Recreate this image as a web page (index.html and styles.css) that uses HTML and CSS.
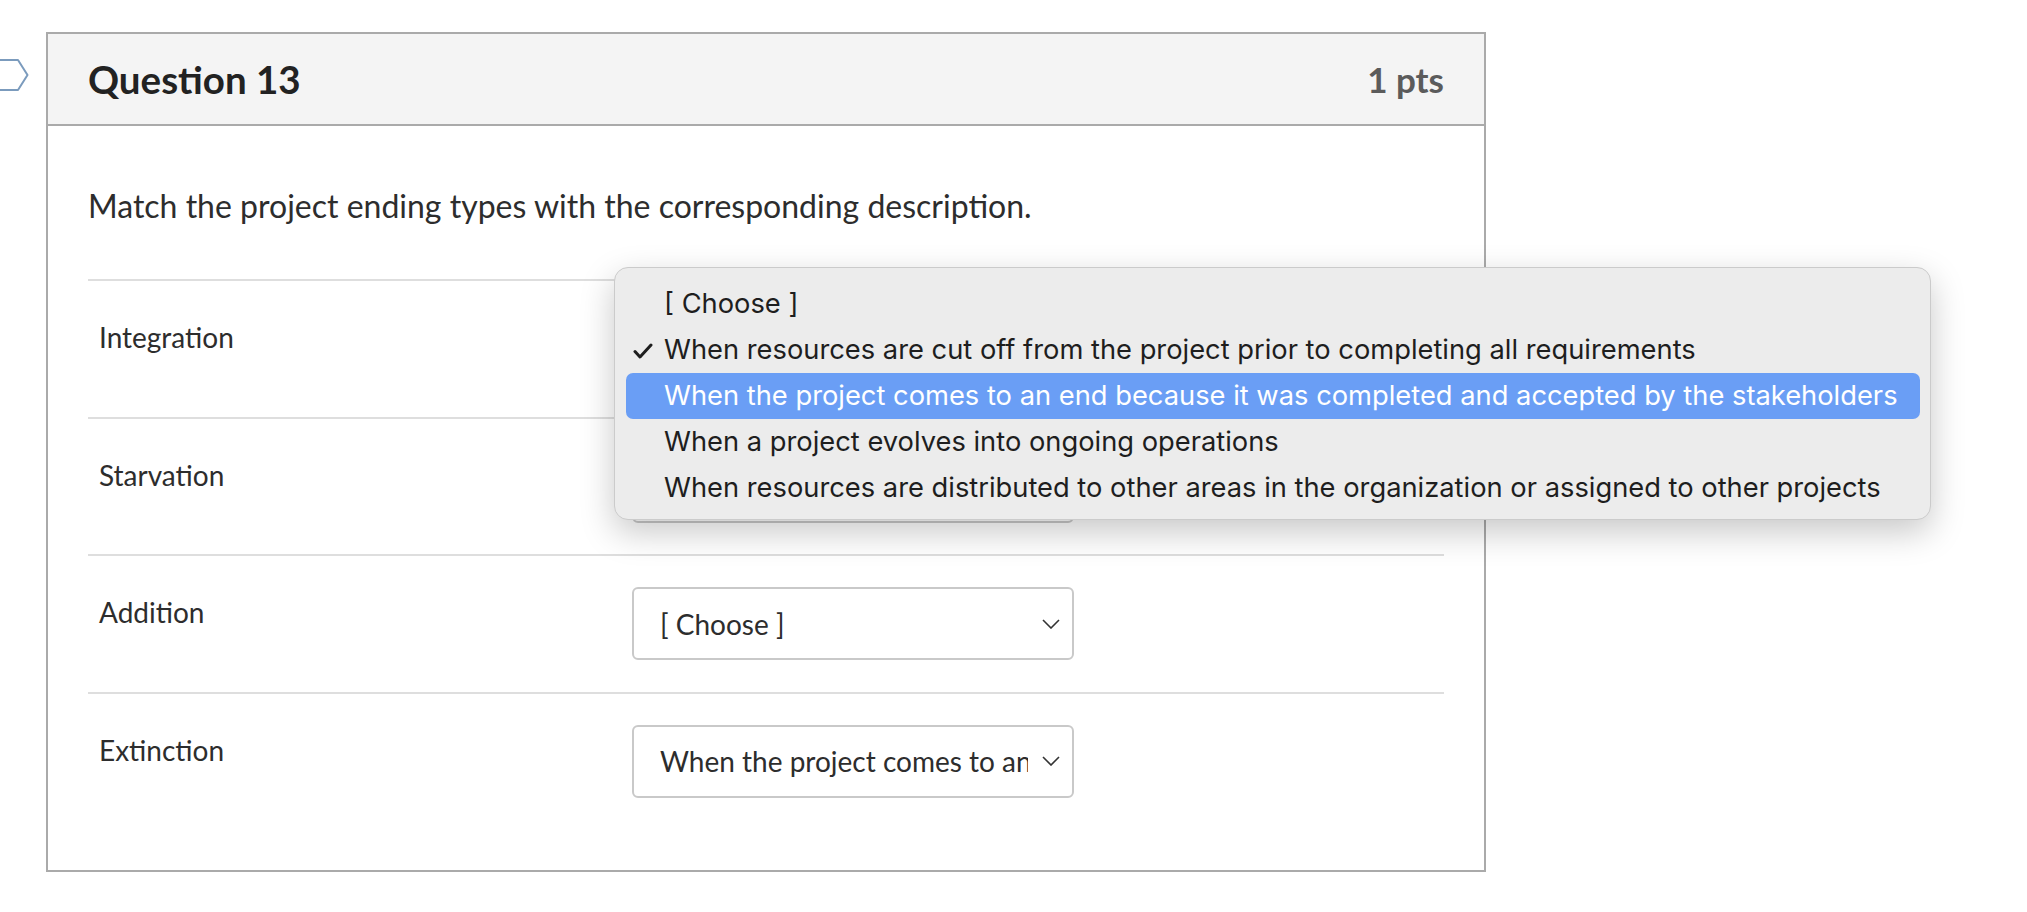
FILE: index.html
```html
<!DOCTYPE html>
<html lang="en">
<head>
    <meta charset="UTF-8">
    <title>Question 13</title>
    <link rel="stylesheet" href="styles.css">
</head>
<body>
    <!-- flag marker sitting in the left margin -->
    <svg class="flag" width="34" height="40" viewBox="0 0 34 40">
        <path d="M-6 3 L18 3 L27.5 18 L18 33 L-6 33 Z" fill="#fff" stroke="#7b9bbd" stroke-width="2" stroke-linejoin="round"/>
    </svg>

    <div class="page">
        <div class="question">
            <div class="question-header">
                <h2>Question 13</h2>
                <span class="pts">1 pts</span>
            </div>

            <div class="question-body">
                <p class="question-text">Match the project ending types with the corresponding description.</p>

                <div class="match-row">
                    <div class="match-label">Integration</div>
                    <div class="select">
                        <span class="select-value">When resources are cut off from the project prior to completing all requirements</span>
                        <svg class="chevron" width="18" height="10" viewBox="0 0 18 10"><path d="M1 1 L9 9 L17 1" fill="none" stroke="#333" stroke-width="1.6"/></svg>
                    </div>
                </div>
                <div class="match-row">
                    <div class="match-label">Starvation</div>
                    <div class="select">
                        <span class="select-value">[ Choose ]</span>
                        <svg class="chevron" width="18" height="10" viewBox="0 0 18 10"><path d="M1 1 L9 9 L17 1" fill="none" stroke="#333" stroke-width="1.6"/></svg>
                    </div>
                </div>
                <div class="match-row">
                    <div class="match-label">Addition</div>
                    <div class="select">
                        <span class="select-value">[ Choose ]</span>
                        <svg class="chevron" width="18" height="10" viewBox="0 0 18 10"><path d="M1 1 L9 9 L17 1" fill="none" stroke="#333" stroke-width="1.6"/></svg>
                    </div>
                </div>
                <div class="match-row">
                    <div class="match-label">Extinction</div>
                    <div class="select">
                        <span class="select-value">When the project comes to an end because it was completed and accepted by the stakeholders</span>
                        <svg class="chevron" width="18" height="10" viewBox="0 0 18 10"><path d="M1 1 L9 9 L17 1" fill="none" stroke="#333" stroke-width="1.6"/></svg>
                    </div>
                </div>
            </div>
        </div>
    </div>

    <!-- open native menu for the Integration select -->
    <ul class="menu">
        <li>[ Choose ]</li>
        <li class="checked">
            <svg class="check" width="20" height="16" viewBox="0 0 20 16"><path d="M2 8.5 L7 14 L18 2" fill="none" stroke="#1e1e1e" stroke-width="3" stroke-linecap="round" stroke-linejoin="round"/></svg>
            When resources are cut off from the project prior to completing all requirements
        </li>
        <li class="active">When the project comes to an end because it was completed and accepted by the stakeholders</li>
        <li>When a project evolves into ongoing operations</li>
        <li>When resources are distributed to other areas in the organization or assigned to other projects</li>
    </ul>
</body>
</html>
```

FILE: styles.css
```css
/* General */
body {
    margin: 0;
    background: #fff;
    font-family: Lato, "Open Sans", sans-serif;
    color: #2d2d2d;
}

.flag {
    position: absolute;
    left: 0;
    top: 57px;
}

.page {
    padding: 32px 0 0 46px;
}

/* Question card */
.question {
    width: 1440px;
    border: 2px solid #aaaaaa;
    box-sizing: border-box;
}

.question-header {
    display: flex;
    justify-content: space-between;
    align-items: center;
    height: 90px;
    padding: 0 40px;
    background: #f4f4f4;
    border-bottom: 2px solid #aaaaaa;
}
.question-header h2 {
    margin: 0;
    font-size: 38.5px;
    font-weight: 700;
    color: #222;
}
.pts {
    font-size: 35px;
    font-weight: 700;
    color: #5b5b5b;
}

.question-body {
    padding: 0 40px 72px;
}
.question-text {
    margin: 0;
    padding: 56px 0 49px;
    font-size: 32px;
    line-height: 48px;
}

/* Matching rows */
.match-row {
    display: flex;
    height: 137.5px;
    padding-top: 31px;
    box-sizing: border-box;
    border-top: 2px solid #dedede;
}
.match-row:last-child {
    height: 106px;
}
.match-label {
    width: 533px;
    padding: 4px 0 0 11px;
    font-size: 28px;
    line-height: 42px;
}

.select {
    display: flex;
    align-items: center;
    width: 442px;
    height: 73px;
    padding: 0 12px 0 26px;
    box-sizing: border-box;
    border: 2px solid #c9c9c9;
    border-radius: 6px;
    background: #fff;
    font-size: 28px;
}
.select-value {
    flex: 1;
    overflow: hidden;
    white-space: nowrap;
    margin-right: 14px;
}
.chevron {
    flex: none;
}

/* Native popup menu */
.menu {
    position: absolute;
    left: 614px;
    top: 267px;
    width: 1317px;
    height: 253px;
    margin: 0;
    padding: 13px 10px 0 11px;
    box-sizing: border-box;
    list-style: none;
    background: #ececec;
    border: 1px solid #cbcbcb;
    border-radius: 14px;
    box-shadow: 0 12px 34px rgba(0, 0, 0, 0.22);
    font-family: Inter, "Noto Sans", sans-serif;
    font-size: 27.3px;
    color: #1e1e1e;
}
.menu li {
    position: relative;
    height: 46px;
    line-height: 46px;
    padding-left: 38px;
    border-radius: 7px;
    white-space: nowrap;
}
.menu li.active {
    background: #6a9ef5;
    color: #fff;
}
.check {
    position: absolute;
    left: 7px;
    top: 16px;
}
```
